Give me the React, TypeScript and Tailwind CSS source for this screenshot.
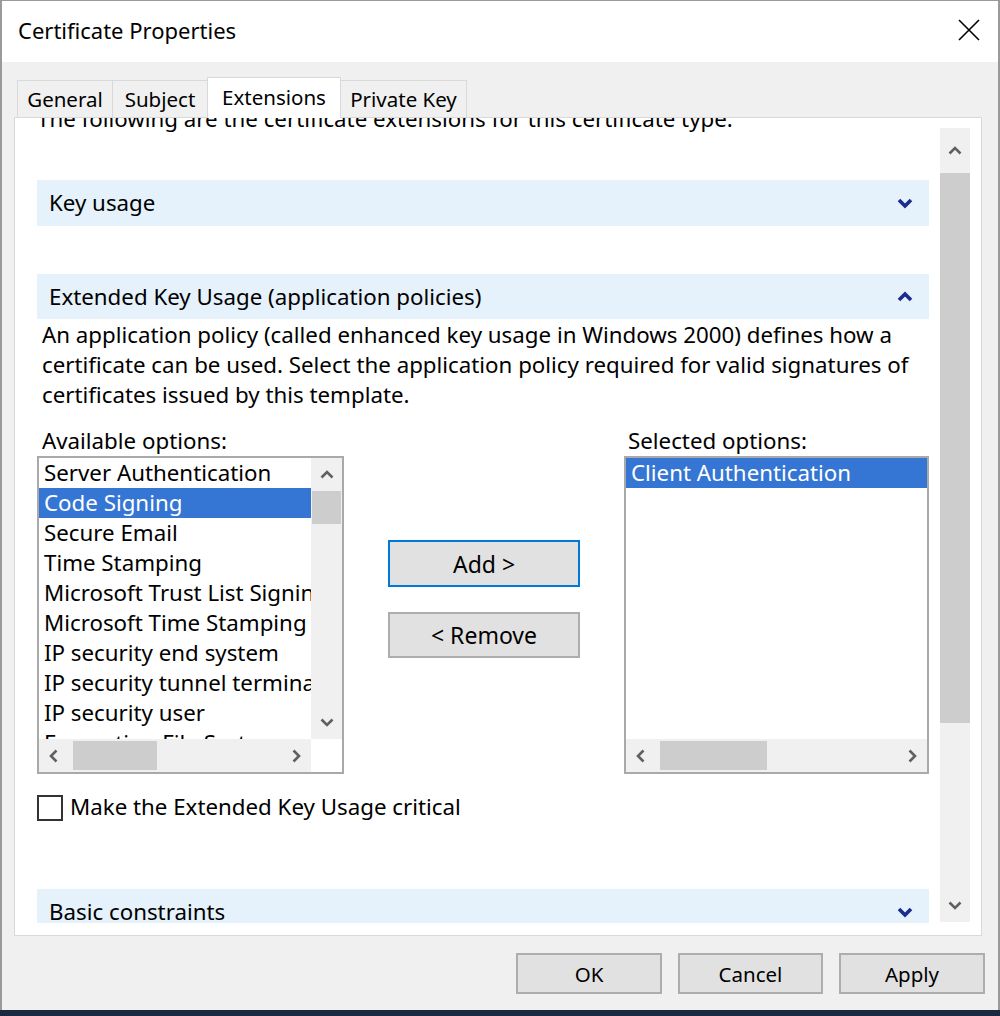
import React from 'react'

type Dir = 'up' | 'down' | 'left' | 'right'

const Chevron = ({ dir, color = '#606060', stroke = 2.6 }: { dir: Dir; color?: string; stroke?: number }) => {
  const vertical = dir === 'up' || dir === 'down'
  const w = vertical ? 14 : 9
  const h = vertical ? 9 : 14
  const points = {
    up: '1.5,7.5 7,2 12.5,7.5',
    down: '1.5,1.5 7,7 12.5,1.5',
    left: '7.5,1.5 2,7 7.5,12.5',
    right: '1.5,1.5 7,7 1.5,12.5',
  }[dir]
  return (
    <svg width={w} height={h} viewBox={`0 0 ${w} ${h}`}>
      <polyline points={points} fill="none" stroke={color} strokeWidth={stroke} />
    </svg>
  )
}

const AccordionChevron = ({ open }: { open?: boolean }) => (
  <svg width="16" height="11" viewBox="0 0 16 11">
    <polyline
      points={open ? '2,9 8,3 14,9' : '2,2 8,8 14,2'}
      fill="none"
      stroke="#1b2c8c"
      strokeWidth="3.6"
    />
  </svg>
)

const SectionHeader = ({ title, open, className = '' }: { title: string; open?: boolean; className?: string }) => (
  <div className={`flex items-center justify-between bg-[#e5f1fb] pl-[12px] pr-[16px] ${className}`}>
    <span className="leading-[30px]">{title}</span>
    <AccordionChevron open={open} />
  </div>
)

const HScroll = ({ thumbLeft, thumbWidth }: { thumbLeft: number; thumbWidth: number }) => (
  <div className="relative flex h-[33px] items-center justify-between bg-[#f0f0f0] px-[10px]">
    <Chevron dir="left" />
    {/* thumb */}
    <div className="absolute top-[2px] h-[29px] bg-[#cdcdcd]" style={{ left: thumbLeft, width: thumbWidth }} />
    <Chevron dir="right" />
  </div>
)

const available = [
  'Server Authentication',
  'Code Signing',
  'Secure Email',
  'Time Stamping',
  'Microsoft Trust List Signing',
  'Microsoft Time Stamping',
  'IP security end system',
  'IP security tunnel termination',
  'IP security user',
  'Encrypting File System',
]

export default function App() {
  return (
    <div className="h-[1016px] w-[1000px] bg-[#1b2940] font-['Noto_Sans',sans-serif] text-[22.3px] leading-[30px] text-black">
      <div className="flex h-[1010px] flex-col border-l-2 border-r-2 border-t border-[#9a9a9a] bg-[#f0f0f0]">
        {/* Title bar */}
        <div className="flex h-[61px] items-center justify-between bg-white pb-[3px] pl-[16px] pr-[18px]">
          <span className="text-[22px]">Certificate Properties</span>
          <svg width="22" height="22" viewBox="0 0 22 22">
            <path d="M1 1 L21 21 M21 1 L1 21" stroke="#000" strokeWidth="1.6" />
          </svg>
        </div>

        {/* Tabs */}
        <div className="ml-[15px] mt-[15px] flex h-[40px] items-end text-[20.5px] leading-[26px]">
          <div className="flex h-[37px] w-[96px] items-center justify-center border border-b-0 border-[#d9d9d9] bg-[#f0f0f0]">General</div>
          <div className="-ml-px flex h-[37px] w-[96px] items-center justify-center border border-b-0 border-[#d9d9d9] bg-[#f0f0f0]">Subject</div>
          <div className="relative z-10 -mb-px -ml-px flex h-[41px] w-[134px] items-center justify-center border border-b-0 border-[#d9d9d9] bg-white pb-[3px]">Extensions</div>
          <div className="-ml-px flex h-[37px] w-[127px] items-center justify-center border border-b-0 border-[#d9d9d9] bg-[#f0f0f0]">Private Key</div>
        </div>

        {/* Panel */}
        <div className="ml-[12px] flex h-[819px] w-[968px] flex-col border border-[#d9d9d9] bg-white">
          <div className="flex h-[805px]">
            {/* Scrolling content */}
            <div className="h-[805px] flex-1 overflow-hidden pl-[22px] pr-[11px]">
              <div className="-mt-[14px] h-[30px] whitespace-nowrap">
                The following are the certificate extensions for this certificate type.
              </div>

              <SectionHeader title="Key usage" className="mt-[46px] h-[46px]" />
              <SectionHeader title="Extended Key Usage (application policies)" open className="mt-[48px] h-[45px]" />

              <div className="ml-[5px] mt-[1px] whitespace-nowrap">
                <div>An application policy (called enhanced key usage in Windows 2000) defines how a</div>
                <div>certificate can be used. Select the application policy required for valid signatures of</div>
                <div>certificates issued by this template.</div>
              </div>

              <div className="mt-[16px] flex h-[30px]">
                <span className="ml-[5px] w-[582px]">Available options:</span>
                <span className="ml-[4px]">Selected options:</span>
              </div>

              {/* List boxes */}
              <div className="flex h-[318px]">
                <div className="flex w-[307px] flex-col border-2 border-[#a9a9a9]">
                  <div className="flex h-[281px]">
                    <div className="flex-1 overflow-hidden">
                      {available.map((item, i) => (
                        <div
                          key={item}
                          className={`h-[30px] whitespace-nowrap pl-[5px] ${i === 1 ? 'bg-[#3576d5] text-white' : ''}`}
                        >
                          {item}
                        </div>
                      ))}
                    </div>
                    <div className="flex w-[31px] flex-col items-center bg-[#f0f0f0]">
                      <div className="flex h-[33px] items-center">
                        <Chevron dir="up" />
                      </div>
                      <div className="h-[33px] w-[29px] bg-[#cdcdcd]" />
                      <div className="flex-1" />
                      <div className="flex h-[33px] items-center">
                        <Chevron dir="down" />
                      </div>
                    </div>
                  </div>
                  <div className="flex">
                    <div className="flex-1">
                      <HScroll thumbLeft={34} thumbWidth={84} />
                    </div>
                    <div className="w-[31px] bg-white" />
                  </div>
                </div>

                <div className="ml-[44px] flex w-[192px] flex-col text-[23px]">
                  <button className="mt-[84px] h-[47px] border-2 border-[#0078d7] bg-[#e1e1e1]">Add &gt;</button>
                  <button className="mt-[25px] h-[46px] border-2 border-[#adadad] bg-[#e1e1e1]">&lt; Remove</button>
                </div>

                <div className="ml-[44px] flex w-[305px] flex-col border-2 border-[#a9a9a9]">
                  <div className="flex-1">
                    <div className="h-[30px] whitespace-nowrap bg-[#3576d5] pl-[5px] text-white">
                      Client Authentication
                    </div>
                  </div>
                  <HScroll thumbLeft={34} thumbWidth={107} />
                </div>
              </div>

              {/* Checkbox */}
              <div className="mt-[21px] flex h-[26px] items-center">
                <div className="h-[26px] w-[26px] shrink-0 border-2 border-[#333333] bg-white" />
                <span className="-mt-[2px] ml-[7px] leading-[26px]">Make the Extended Key Usage critical</span>
              </div>

              <SectionHeader title="Basic constraints" className="mt-[68px] h-[46px]" />
            </div>

            {/* Panel scrollbar */}
            <div className="mt-[10px] flex h-[794px] w-[30px] flex-col bg-[#f0f0f0]">
              <div className="flex h-[45px] items-center justify-center">
                <Chevron dir="up" />
              </div>
              <div className="h-[550px] bg-[#cdcdcd]" />
              <div className="flex-1" />
              <div className="flex h-[33px] items-center justify-center">
                <Chevron dir="down" />
              </div>
            </div>
            <div className="w-[11px]" />
          </div>
        </div>

        {/* Dialog buttons */}
        <div className="mr-[13px] mt-[17px] flex justify-end gap-[16px] text-[20.5px]">
          <button className="h-[41px] w-[146px] border-2 border-[#adadad] bg-[#e1e1e1]">OK</button>
          <button className="h-[41px] w-[145px] border-2 border-[#adadad] bg-[#e1e1e1]">Cancel</button>
          <button className="h-[41px] w-[146px] border-2 border-[#adadad] bg-[#e1e1e1]">Apply</button>
        </div>
      </div>
    </div>
  )
}
